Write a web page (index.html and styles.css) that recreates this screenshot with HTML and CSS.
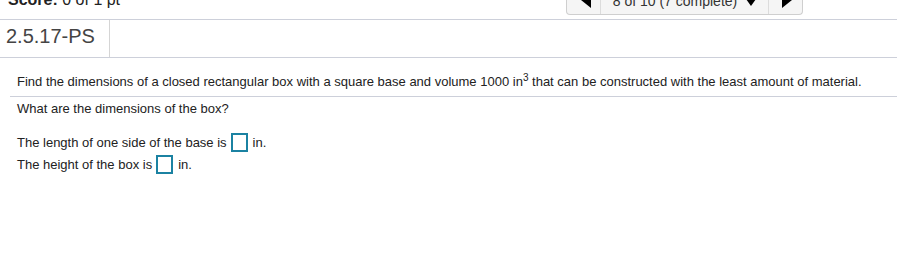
FILE: index.html
```html
<!DOCTYPE html>
<html lang="en">
<head>
    <meta charset="UTF-8">
    <meta name="viewport" content="width=device-width, initial-scale=1.0">
    <title>2.5.17-PS</title>
    <link rel="stylesheet" href="styles.css">
</head>
<body>
    <header class="top-bar">
        <div class="score"><b>Score:</b> 0 of 1 pt</div>
        <div class="question-nav">
            <div class="nav-cell nav-prev"><span class="arrow-left"></span></div>
            <div class="nav-cell nav-list">
                <span>8 of 10 (7 complete)</span>
                <span class="caret-down"></span>
            </div>
            <div class="nav-cell nav-next"><span class="arrow-right"></span></div>
        </div>
    </header>

    <div class="title-row">
        <div class="title">2.5.17-PS</div>
    </div>

    <div class="question">
        <div class="stem">
            Find the dimensions of a closed rectangular box with a square base and volume 1000 in<sup>3</sup> that can be constructed with the least amount of material.
        </div>
        <div class="prompt">What are the dimensions of the box?</div>
        <div class="answers">
            <div class="answer-row">
                <span>The length of one side of the base is</span>
                <span class="answer-box"></span>
                <span>in.</span>
            </div>
            <div class="answer-row">
                <span>The height of the box is</span>
                <span class="answer-box"></span>
                <span>in.</span>
            </div>
        </div>
    </div>
</body>
</html>
```

FILE: styles.css
```css
body {
    font-family: "Liberation Sans", Arial, sans-serif;
    background-color: #ffffff;
    color: #333;
    margin: 0;
    padding: 0;
}

/* Top bar (scrolled, partly cut off) */
.top-bar {
    height: 19px;
    overflow: hidden;
    display: flex;
    justify-content: space-between;
    align-items: flex-end;
    border-bottom: 1px solid #cdd0da;
}

.score {
    font-size: 16px;
    line-height: 16px;
    color: #222;
    padding-left: 8px;
    margin-bottom: 11px;
}

.question-nav {
    display: flex;
    height: 40px;
    margin-right: 94px;
    margin-bottom: 4px;
    background-color: #f5f5f5;
    border: 1px solid #cfcfcf;
    border-top: none;
    border-radius: 0 0 4px 4px;
}

.nav-cell {
    display: flex;
    align-items: flex-end;
    justify-content: center;
    padding-bottom: 6px;
    box-sizing: border-box;
}

.nav-prev {
    width: 34px;
    border-right: 1px solid #dcdcdc;
}

.nav-list {
    width: 167px;
    gap: 9px;
    font-size: 14px;
    line-height: 14px;
    color: #333;
}

.nav-next {
    width: 34px;
    border-left: 1px solid #dcdcdc;
}

.arrow-left {
    width: 0;
    height: 0;
    border-top: 8px solid transparent;
    border-bottom: 8px solid transparent;
    border-right: 10px solid #000;
    margin-left: 4px;
}

.arrow-right {
    width: 0;
    height: 0;
    border-top: 8px solid transparent;
    border-bottom: 8px solid transparent;
    border-left: 10px solid #000;
    margin-left: 2px;
}

.caret-down {
    width: 0;
    height: 0;
    border-left: 5px solid transparent;
    border-right: 5px solid transparent;
    border-top: 7px solid #000;
    margin-bottom: 2px;
}

/* Title */
.title-row {
    height: 37px;
    border-bottom: 1px solid #cdd0da;
}

.title {
    width: 103px;
    height: 37px;
    padding-left: 6px;
    line-height: 33px;
    font-size: 20px;
    color: #444;
    border-right: 1px solid #d5d5d5;
}

/* Question */
.question {
    margin-left: 10px;
    font-size: 13px;
    line-height: 15px;
}

.stem {
    padding: 16px 0 7px 7px;
    border-bottom: 1px solid #cdd0da;
    color: #222;
}

.stem sup {
    font-size: 10px;
    line-height: 0;
}

.prompt {
    padding: 4px 0 0 7px;
    color: #222;
}

.answers {
    margin-top: 15px;
    padding-left: 7px;
}

.answer-row {
    display: flex;
    align-items: center;
    height: 22px;
    color: #222;
}

.answer-box {
    width: 17px;
    height: 19px;
    box-sizing: border-box;
    border: 2px solid #1b82a2;
    margin: 0 5px 0 4px;
}
```
